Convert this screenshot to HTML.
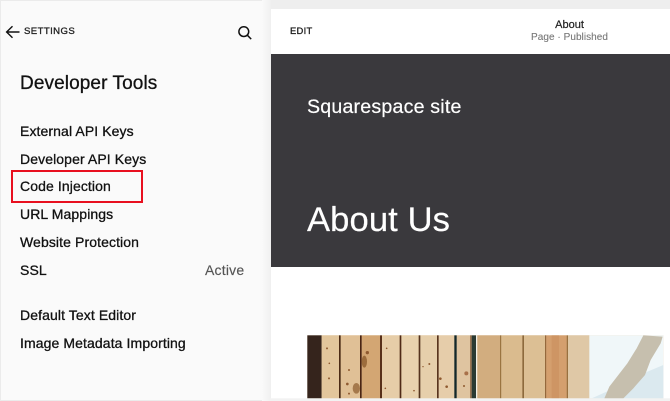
<!DOCTYPE html>
<html>
<head>
<meta charset="utf-8">
<style>
html,body{margin:0;padding:0;width:670px;height:401px;overflow:hidden;background:#fafafa}
body{position:relative;font-family:"Liberation Sans",sans-serif;color:#1a1a1a}
.t{position:absolute;white-space:nowrap;line-height:16px}
.n{left:20px;font-size:14px;font-weight:400;color:#111;-webkit-text-stroke:.3px #111;letter-spacing:.1px}
.band{position:absolute;background:#ebebeb}
</style>
</head>
<body>
<div class="band" style="left:0;top:0;width:670px;height:1px"></div>
<div class="band" style="left:0;top:0;width:1px;height:401px"></div>
<div class="band" style="left:0;top:400px;width:670px;height:1px"></div>
<div style="position:absolute;left:262px;top:0;width:9px;height:401px;background:linear-gradient(to right,#fafafa,#f0f0f0)"></div>
<div class="band" style="left:271px;top:0;width:399px;height:9px;background:#eeeeee"></div>

<svg style="position:absolute;left:5px;top:24px" width="16" height="16" viewBox="0 0 16 16" fill="none" stroke="#111" stroke-width="1.4"><path d="M14.5 8H1.6M7.5 2.2L1.6 8l5.9 5.8"/></svg>
<div class="t" style="left:24px;top:24px;font-size:9.6px;letter-spacing:.4px;color:#222;-webkit-text-stroke:.3px #222">SETTINGS</div>
<svg style="position:absolute;left:236px;top:24px" width="17" height="17" viewBox="0 0 17 17" fill="none" stroke="#111" stroke-width="1.5"><circle cx="7.8" cy="7.6" r="4.9"/><path d="M11.3 11.2l3.9 3.9"/></svg>

<div class="t" style="left:20px;top:75px;font-size:19px;line-height:18px;color:#111;-webkit-text-stroke:.3px #111;letter-spacing:.1px">Developer Tools</div>

<div class="t n" style="top:123px">External API Keys</div>
<div class="t n" style="top:151px">Developer API Keys</div>
<div class="t n" style="top:178px">Code Injection</div>
<div style="position:absolute;left:11px;top:170px;width:128px;height:29px;border:2px solid #e8101f"></div>
<div class="t n" style="top:206px">URL Mappings</div>
<div class="t n" style="top:234px">Website Protection</div>
<div class="t n" style="top:262px">SSL</div>
<div class="t" style="left:205px;top:262px;font-size:14px;color:#555;letter-spacing:.2px;-webkit-text-stroke:.15px #555">Active</div>
<div class="t n" style="top:307px">Default Text Editor</div>
<div class="t n" style="top:335px">Image Metadata Importing</div>

<div style="position:absolute;left:271px;top:9px;width:399px;height:390px;background:#fff"></div>
<div class="t" style="left:290px;top:23px;font-size:9.4px;letter-spacing:.3px;color:#222;-webkit-text-stroke:.3px #222">EDIT</div>
<div class="t" style="left:470px;width:199px;text-align:center;top:17px;font-size:11px;color:#222;-webkit-text-stroke:.2px #222">About</div>
<div class="t" style="left:470px;width:199px;text-align:center;top:30px;font-size:10px;color:#777;letter-spacing:.05px;-webkit-text-stroke:.1px #777">Page · Published</div>

<div style="position:absolute;left:271px;top:54px;width:399px;height:213px;background:#3a393d"></div>
<div class="t" style="left:307px;top:96px;font-size:19.6px;line-height:22px;color:#fff;letter-spacing:.2px;-webkit-text-stroke:.2px #fff">Squarespace site</div>
<div class="t" style="left:307px;top:200px;font-size:34.6px;line-height:40px;color:#fff;letter-spacing:.1px;-webkit-text-stroke:.2px #fff">About Us</div>

<svg style="position:absolute;left:270px;top:320px" width="400" height="81" viewBox="0 0 1200 243">
<rect x="112" y="46" width="1068" height="189" fill="#e3cba6"/>
<rect x="112" y="46" width="43" height="189" fill="#35241c"/>
<rect x="155" y="46" width="52" height="189" fill="#e2c69c"/>
<rect x="212" y="46" width="58" height="189" fill="#e0c096"/>
<rect x="275" y="46" width="55" height="189" fill="#d3a673"/>
<rect x="336" y="46" width="53" height="189" fill="#e6cda8"/>
<rect x="394" y="46" width="52" height="189" fill="#e8d2ae"/>
<rect x="451" y="46" width="50" height="189" fill="#e6cfab"/>
<rect x="506" y="46" width="47" height="189" fill="#e6cdaa"/>
<rect x="560" y="46" width="45" height="189" fill="#dfc4a0"/>
<rect x="207" y="46" width="5" height="189" fill="#4a2a14"/>
<rect x="270" y="46" width="5" height="189" fill="#4a2412"/>
<rect x="330" y="46" width="6" height="189" fill="#58301a"/>
<rect x="389" y="46" width="5" height="189" fill="#4f2a16"/>
<rect x="446" y="46" width="5" height="189" fill="#54331e"/>
<rect x="501" y="46" width="5" height="189" fill="#59351e"/>
<rect x="553" y="46" width="7" height="189" fill="#13282b"/>
<rect x="600" y="46" width="5" height="189" fill="#9c7552"/>
<rect x="605" y="46" width="13" height="189" fill="#2a3a33"/>
<rect x="618" y="46" width="4" height="189" fill="#f3efe6"/>
<rect x="622" y="46" width="68" height="189" fill="#d2ad7f"/>
<rect x="690" y="46" width="4" height="189" fill="#9a7440"/>
<rect x="694" y="46" width="63" height="189" fill="#dabb8e"/>
<rect x="757" y="46" width="5" height="189" fill="#8d6a3c"/>
<rect x="762" y="46" width="63" height="189" fill="#dcbf94"/>
<rect x="825" y="46" width="4" height="189" fill="#94683c"/>
<rect x="829" y="46" width="61" height="189" fill="#d49f6e"/>
<rect x="890" y="46" width="4" height="189" fill="#99703f"/>
<rect x="894" y="46" width="64" height="189" fill="#dfc8a6"/>
<g fill="#8f5a30">
<circle cx="171" cy="85" r="3"/><circle cx="178" cy="130" r="2.5"/><circle cx="177" cy="175" r="3"/>
<circle cx="237" cy="150" r="3"/><circle cx="232" cy="192" r="4"/><circle cx="237" cy="221" r="3"/>
<ellipse cx="259" cy="205" rx="11" ry="16" fill="#a5794c"/>
<ellipse cx="283" cy="125" rx="8" ry="18" fill="#9c6c3c"/>
<circle cx="292" cy="98" r="5"/>
<circle cx="346" cy="205" r="2.5"/><circle cx="350" cy="85" r="2.5"/>
<circle cx="478" cy="132" r="3"/><circle cx="459" cy="140" r="2"/>
<circle cx="432" cy="212" r="2.5"/><circle cx="511" cy="176" r="4"/><circle cx="530" cy="200" r="4"/>
<circle cx="582" cy="198" r="3"/><circle cx="589" cy="160" r="6" fill="#a8714a"/>
</g>
<rect x="845" y="46" width="22" height="189" fill="#c98d5c" opacity=".55"/>
<rect x="958" y="46" width="222" height="189" fill="#f0f7f9"/>
<path d="M965 235L1010 215 1060 190 1120 160 1180 135V235Z" fill="#dbe9ef"/>
<path d="M1120 46L1178 50 1172 70 1142 120 1125 165 1090 205 1060 235H1003L1018 200 1045 165 1072 130 1100 85Z" fill="#c6bfae"/>
<rect x="0" y="235" width="1200" height="8" fill="#f2f2f2"/>
</svg>
</body>
</html>
